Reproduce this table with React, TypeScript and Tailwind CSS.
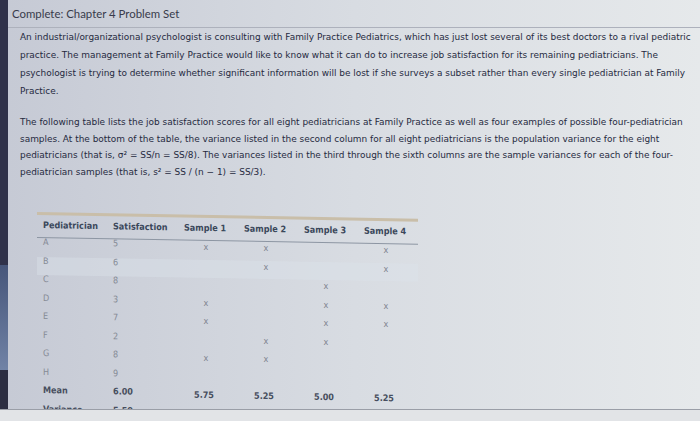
import React from 'react';

const body = { fontFamily: '"DejaVu Sans", Verdana, sans-serif' };
const cond = { fontFamily: '"DejaVu Sans Condensed", "DejaVu Sans", Verdana, sans-serif' };

const intro = [
  'An industrial/organizational psychologist is consulting with Family Practice Pediatrics, which has just lost several of its best doctors to a rival pediatric',
  'practice. The management at Family Practice would like to know what it can do to increase job satisfaction for its remaining pediatricians. The',
  'psychologist is trying to determine whether significant information will be lost if she surveys a subset rather than every single pediatrician at Family',
  'Practice.',
];

const follow = [
  'The following table lists the job satisfaction scores for all eight pediatricians at Family Practice as well as four examples of possible four-pediatrician',
  'samples. At the bottom of the table, the variance listed in the second column for all eight pediatricians is the population variance for the eight',
  'pediatricians (that is, σ² = SS/n = SS/8). The variances listed in the third through the sixth columns are the sample variances for each of the four-',
  'pediatrician samples (that is, s² = SS / (n − 1) = SS/3).',
];

const rows: [string, string, number[]][] = [
  ['A', '5', [1, 1, 0, 1]],
  ['B', '6', [0, 1, 0, 1]],
  ['C', '8', [0, 0, 1, 0]],
  ['D', '3', [1, 0, 1, 1]],
  ['E', '7', [1, 0, 1, 1]],
  ['F', '2', [0, 1, 1, 0]],
  ['G', '8', [1, 1, 0, 0]],
  ['H', '9', [0, 0, 0, 0]],
];

const footer: [string, string, string[]][] = [
  ['Mean', '6.00', ['5.75', '5.25', '5.00', '5.25']],
  ['Variance', '5.50', ['4.92', '6.25', '8.67', '2.92']],
];

export default function App() {
  return (
    <div className="w-[700px] h-[421px] overflow-hidden flex flex-col bg-[#e2e4e7]" style={body}>
      <div className="h-[410px] shrink-0 flex border-b border-[#9a9ea7] overflow-hidden">
        {/* left window edge */}
        <div className="w-[8px] shrink-0 flex flex-col">
          <div className="h-[265px] bg-[#30324a]"></div>
          <div className="h-[105px] bg-linear-to-b from-[#47567a] to-[#7183a6]"></div>
          <div className="flex-1 bg-[#2c2e42]"></div>
        </div>

        <div className="flex-1 flex flex-col bg-linear-to-r from-[#c6cad5] via-[#d8dce2] to-[#e6e9eb]">
          <div
            className="h-[28px] shrink-0 border-b border-[#adb1bc] pl-[4px] flex items-center text-[11.4px] text-[#383b4b]"
            style={{ fontFamily: 'Lato, "Open Sans", sans-serif' }}
          >
            Complete: Chapter 4 Problem Set
          </div>

          <div className="pl-[12px] text-[8.95px] text-[#262a3f]">
            <div className="leading-[18px]">
              {intro.map((l, i) => (
                <div key={i} className="whitespace-nowrap">{l}</div>
              ))}
            </div>
            <div className="leading-[16.5px] mt-[14px]">
              {follow.map((l, i) => (
                <div key={i} className="whitespace-nowrap">{l}</div>
              ))}
            </div>

            {/* Table */}
            <div className="ml-[17px] mt-[32px] w-[381px] skew-y-[1deg] origin-left text-[9px]" style={cond}>
              <div className="h-[3px] bg-[#c9bea9]"></div>
              <div className="flex h-[23px] items-center border-b border-[#8d96a3] font-bold text-[#3a475a]">
                <div className="w-[71px] pl-[6px]">Pediatrician</div>
                <div className="w-[70px] pl-[5px]">Satisfaction</div>
                <div className="w-[60px] pl-[6px]">Sample 1</div>
                <div className="w-[60px] pl-[6px]">Sample 2</div>
                <div className="w-[60px] pl-[6px]">Sample 3</div>
                <div className="w-[60px] pl-[6px]">Sample 4</div>
              </div>
              {rows.map(([p, s, marks], i) => (
                <div
                  key={p}
                  className={`flex h-[18.5px] leading-[9px] text-[#858a95] ${i === 1 ? 'bg-[#dde4ec]/40' : ''}`}
                >
                  <div className="w-[71px] pl-[6px]">{p}</div>
                  <div className="w-[70px] pl-[5px]">{s}</div>
                  {marks.map((m, j) => (
                    <div key={j} className="w-[60px] text-center pr-[4px] pt-[2px] text-[#7b808b]">{m ? 'x' : ''}</div>
                  ))}
                </div>
              ))}
              {footer.map(([label, v, vals]) => (
                <div key={label} className="flex h-[18.5px] leading-[9px] font-bold text-[#474e5e]">
                  <div className="w-[71px] pl-[6px]">{label}</div>
                  <div className="w-[70px] pl-[5px]">{v}</div>
                  {vals.map((x, j) => (
                    <div key={j} className="w-[60px] text-center pr-[8px] pt-[2px]">{x}</div>
                  ))}
                </div>
              ))}
            </div>
          </div>
        </div>
      </div>
    </div>
  );
}
